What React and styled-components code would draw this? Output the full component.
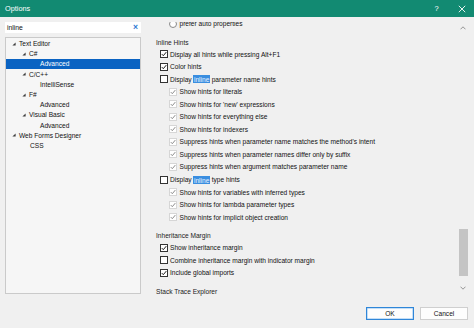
import React from 'react'
import styled, { createGlobalStyle } from 'styled-components'

const GlobalStyle = createGlobalStyle`
    html, body {
        margin: 0;
        padding: 0;
        background: #f0f0f0;
    }
    body {
        width: 474px;
        height: 328px;
        overflow: hidden;
        font-family: "Liberation Sans", Arial, sans-serif;
    }
`

const Dialog = styled.div`
    display: flex;
    flex-direction: column;
    width: 474px;
    height: 328px;
    background: #f0f0f0;
    color: #111;
    font-size: 6.6px;
`

const TitleBar = styled.div`
    flex: none;
    height: 17px;
    display: flex;
    align-items: center;
    padding-left: 5px;
    background: #128a72;
    color: #fff;
    font-size: 7.3px;
`

const TitleText = styled.span`
    flex: 1;
`

const TitleButton = styled.div`
    width: 25px;
    height: 17px;
    display: flex;
    align-items: center;
    justify-content: center;
    font-size: 7.5px;
`

const Main = styled.div`
    flex: 1;
    display: flex;
    min-height: 0;
`

const LeftPane = styled.div`
    width: 136px;
    margin-left: 5px;
    padding: 5px 0 2px;
    display: flex;
    flex-direction: column;
`

const SearchBox = styled.div`
    height: 11px;
    margin-bottom: 4px;
    display: flex;
    align-items: center;
    justify-content: space-between;
    padding: 0 3px 0 2px;
    background: #fff;
    font-size: 6.8px;
`

const ClearGlyph = styled.span`
    color: #2a78d2;
    font-size: 8.5px;
    font-weight: bold;
    line-height: 1;
`

const TreeBox = styled.div`
    flex: 1;
    padding-top: 0.5px;
    background: #f6f6f6;
    border: 1px solid #cacaca;
`

const TreeRow = styled.div`
    height: 10.2px;
    display: flex;
    align-items: center;
    padding-left: ${({ $level }) => 6 + $level * 10}px;
    white-space: nowrap;
    background: ${({ $selected }) => ($selected ? '#0a63c2' : 'transparent')};
    color: ${({ $selected }) => ($selected ? '#fff' : '#111')};
`

const Expander = styled.span`
    width: ${({ $leaf }) => ($leaf ? 8 : 7)}px;
    flex: none;
    display: flex;
    align-items: center;
`

const RightPane = styled.div`
    flex: 1;
    display: flex;
    padding-top: 5px;
    min-width: 0;
`

const Viewport = styled.div`
    flex: 1;
    overflow: hidden;
    min-width: 0;
`

const Content = styled.div`
    margin-top: -4.75px;
`

const Section = styled.div`
    margin-top: 7px;
`

const SectionHeader = styled.div`
    height: 11px;
    display: flex;
    align-items: center;
    padding-left: 15px;
    color: #222;
`

const Row = styled.div`
    height: 12.55px;
    display: flex;
    align-items: center;
    padding-left: ${({ $sub }) => ($sub ? 28 : 19)}px;
    white-space: nowrap;
`

const Box = styled.span`
    width: 8px;
    height: 8px;
    flex: none;
    box-sizing: border-box;
    margin-right: ${({ $sub }) => ($sub ? 2.5 : 2)}px;
    border: 1px solid ${({ $sub }) => ($sub ? '#d6d6d6' : '#333')};
    background: #fff;
    display: flex;
    align-items: center;
    justify-content: center;
`

const Radio = styled(Box)`
    border-radius: 50%;
    border-color: #8a8a8a;
`

const Mark = styled.mark`
    background: #3a8ee0;
    color: #e6f1ff;
    padding: 0.5px 0.5px;
`

const Scrollbar = styled.div`
    width: 12px;
    margin: -1px 5px 2px 0;
    display: flex;
    flex-direction: column;
`

const ScrollArrow = styled.div`
    height: 13px;
    flex: none;
    display: flex;
    align-items: center;
    justify-content: center;
`

const Track = styled.div`
    flex: 1;
    display: flex;
    flex-direction: column;
    align-items: center;
`

const Thumb = styled.div`
    width: 9px;
    height: 47px;
    margin-top: ${({ $offset }) => $offset}px;
    background: #c4c4c4;
`

const Footer = styled.div`
    flex: none;
    height: 32px;
    box-sizing: border-box;
    display: flex;
    justify-content: flex-end;
    align-items: flex-start;
    gap: 6px;
    padding: 11px 6px 0 0;
`

const Button = styled.button`
    width: 48px;
    height: 12.5px;
    padding: 0;
    margin: 0;
    font-family: inherit;
    font-size: 6.6px;
    color: #111;
    background: #fdfdfd;
    border: 1px solid ${({ $primary }) => ($primary ? '#2f86d8' : '#cfcfcf')};
    box-shadow: ${({ $primary }) => ($primary ? 'inset 0 0 0 0.5px #8cc0ef' : 'none')};
`

const Triangle = () => (
    <svg width="4" height="4" viewBox="0 0 4 4">
        <polygon points="3.6,0.4 3.6,3.6 0.4,3.6" fill="#3c3c3c" />
    </svg>
)

const Check = ({ sub }) => (
    <svg width="6" height="6" viewBox="0 0 6 6">
        <polyline points="0.8,3.1 2.3,4.7 5.3,1.1" fill="none" stroke={sub ? '#8c8c8c' : '#1e1e1e'} strokeWidth="1" />
    </svg>
)

const tree = [
    { label: 'Text Editor', level: 0 },
    { label: 'C#', level: 1 },
    { label: 'Advanced', level: 2, leaf: true, selected: true },
    { label: 'C/C++', level: 1 },
    { label: 'IntelliSense', level: 2, leaf: true },
    { label: 'F#', level: 1 },
    { label: 'Advanced', level: 2, leaf: true },
    { label: 'Visual Basic', level: 1 },
    { label: 'Advanced', level: 2, leaf: true },
    { label: 'Web Forms Designer', level: 0 },
    { label: 'CSS', level: 1, leaf: true },
]

const inlineHints = [
    { text: 'Display all hints while pressing Alt+F1', checked: true },
    { text: 'Color hints', checked: true },
    { text: ['Display ', 'inline', ' parameter name hints'] },
    { text: 'Show hints for literals', checked: true, sub: true },
    { text: "Show hints for 'new' expressions", checked: true, sub: true },
    { text: 'Show hints for everything else', checked: true, sub: true },
    { text: 'Show hints for indexers', checked: true, sub: true },
    { text: "Suppress hints when parameter name matches the method's intent", checked: true, sub: true },
    { text: 'Suppress hints when parameter names differ only by suffix', checked: true, sub: true },
    { text: 'Suppress hints when argument matches parameter name', checked: true, sub: true },
    { text: ['Display ', 'inline', ' type hints'] },
    { text: 'Show hints for variables with inferred types', checked: true, sub: true },
    { text: 'Show hints for lambda parameter types', checked: true, sub: true },
    { text: 'Show hints for implicit object creation', checked: true, sub: true },
]

const inheritance = [
    { text: 'Show inheritance margin', checked: true },
    { text: 'Combine inheritance margin with indicator margin' },
    { text: 'Include global imports', checked: true },
]

const OptionRow = ({ option }) => (
    <Row $sub={option.sub}>
        <Box $sub={option.sub}>{option.checked && <Check sub={option.sub} />}</Box>
        {Array.isArray(option.text) ? (
            <span>
                {option.text[0]}
                <Mark>{option.text[1]}</Mark>
                {option.text[2]}
            </span>
        ) : (
            <span>{option.text}</span>
        )}
    </Row>
)

const App = () => (
    <>
        <GlobalStyle />
        <Dialog>
            <TitleBar>
                <TitleText>Options</TitleText>
                <TitleButton>?</TitleButton>
                <TitleButton>
                    <svg width="8" height="8" viewBox="0 0 8 8">
                        <path d="M0.8 0.8 L7.2 7.2 M7.2 0.8 L0.8 7.2" stroke="#fff" strokeWidth="0.9" />
                    </svg>
                </TitleButton>
            </TitleBar>
            <Main>
                <LeftPane>
                    <SearchBox>
                        <span>inline</span>
                        <ClearGlyph>×</ClearGlyph>
                    </SearchBox>
                    <TreeBox>
                        {tree.map((node, i) => (
                            <TreeRow key={i} $level={node.level} $selected={node.selected}>
                                <Expander $leaf={node.leaf}>{!node.leaf && <Triangle />}</Expander>
                                {node.label}
                            </TreeRow>
                        ))}
                    </TreeBox>
                </LeftPane>
                <RightPane>
                    <Viewport>
                        <Content>
                            <Row $sub>
                                <Radio $sub />
                                <span>prefer auto properties</span>
                            </Row>
                            <Section>
                                <SectionHeader>Inline Hints</SectionHeader>
                                {inlineHints.map((o, i) => (
                                    <OptionRow key={i} option={o} />
                                ))}
                            </Section>
                            <Section>
                                <SectionHeader>Inheritance Margin</SectionHeader>
                                {inheritance.map((o, i) => (
                                    <OptionRow key={i} option={o} />
                                ))}
                            </Section>
                            <Section>
                                <SectionHeader>Stack Trace Explorer</SectionHeader>
                            </Section>
                        </Content>
                    </Viewport>
                    <Scrollbar>
                        <ScrollArrow>
                            <svg width="6" height="4" viewBox="0 0 6 4">
                                <polyline points="0.5,3.3 3,0.8 5.5,3.3" fill="none" stroke="#8a8a8a" strokeWidth="0.9" />
                            </svg>
                        </ScrollArrow>
                        <Track>
                            <Thumb $offset={195} />
                        </Track>
                        <ScrollArrow>
                            <svg width="6" height="4" viewBox="0 0 6 4">
                                <polyline points="0.5,0.7 3,3.2 5.5,0.7" fill="none" stroke="#8a8a8a" strokeWidth="0.9" />
                            </svg>
                        </ScrollArrow>
                    </Scrollbar>
                </RightPane>
            </Main>
            <Footer>
                <Button $primary>OK</Button>
                <Button>Cancel</Button>
            </Footer>
        </Dialog>
    </>
)

export default App
